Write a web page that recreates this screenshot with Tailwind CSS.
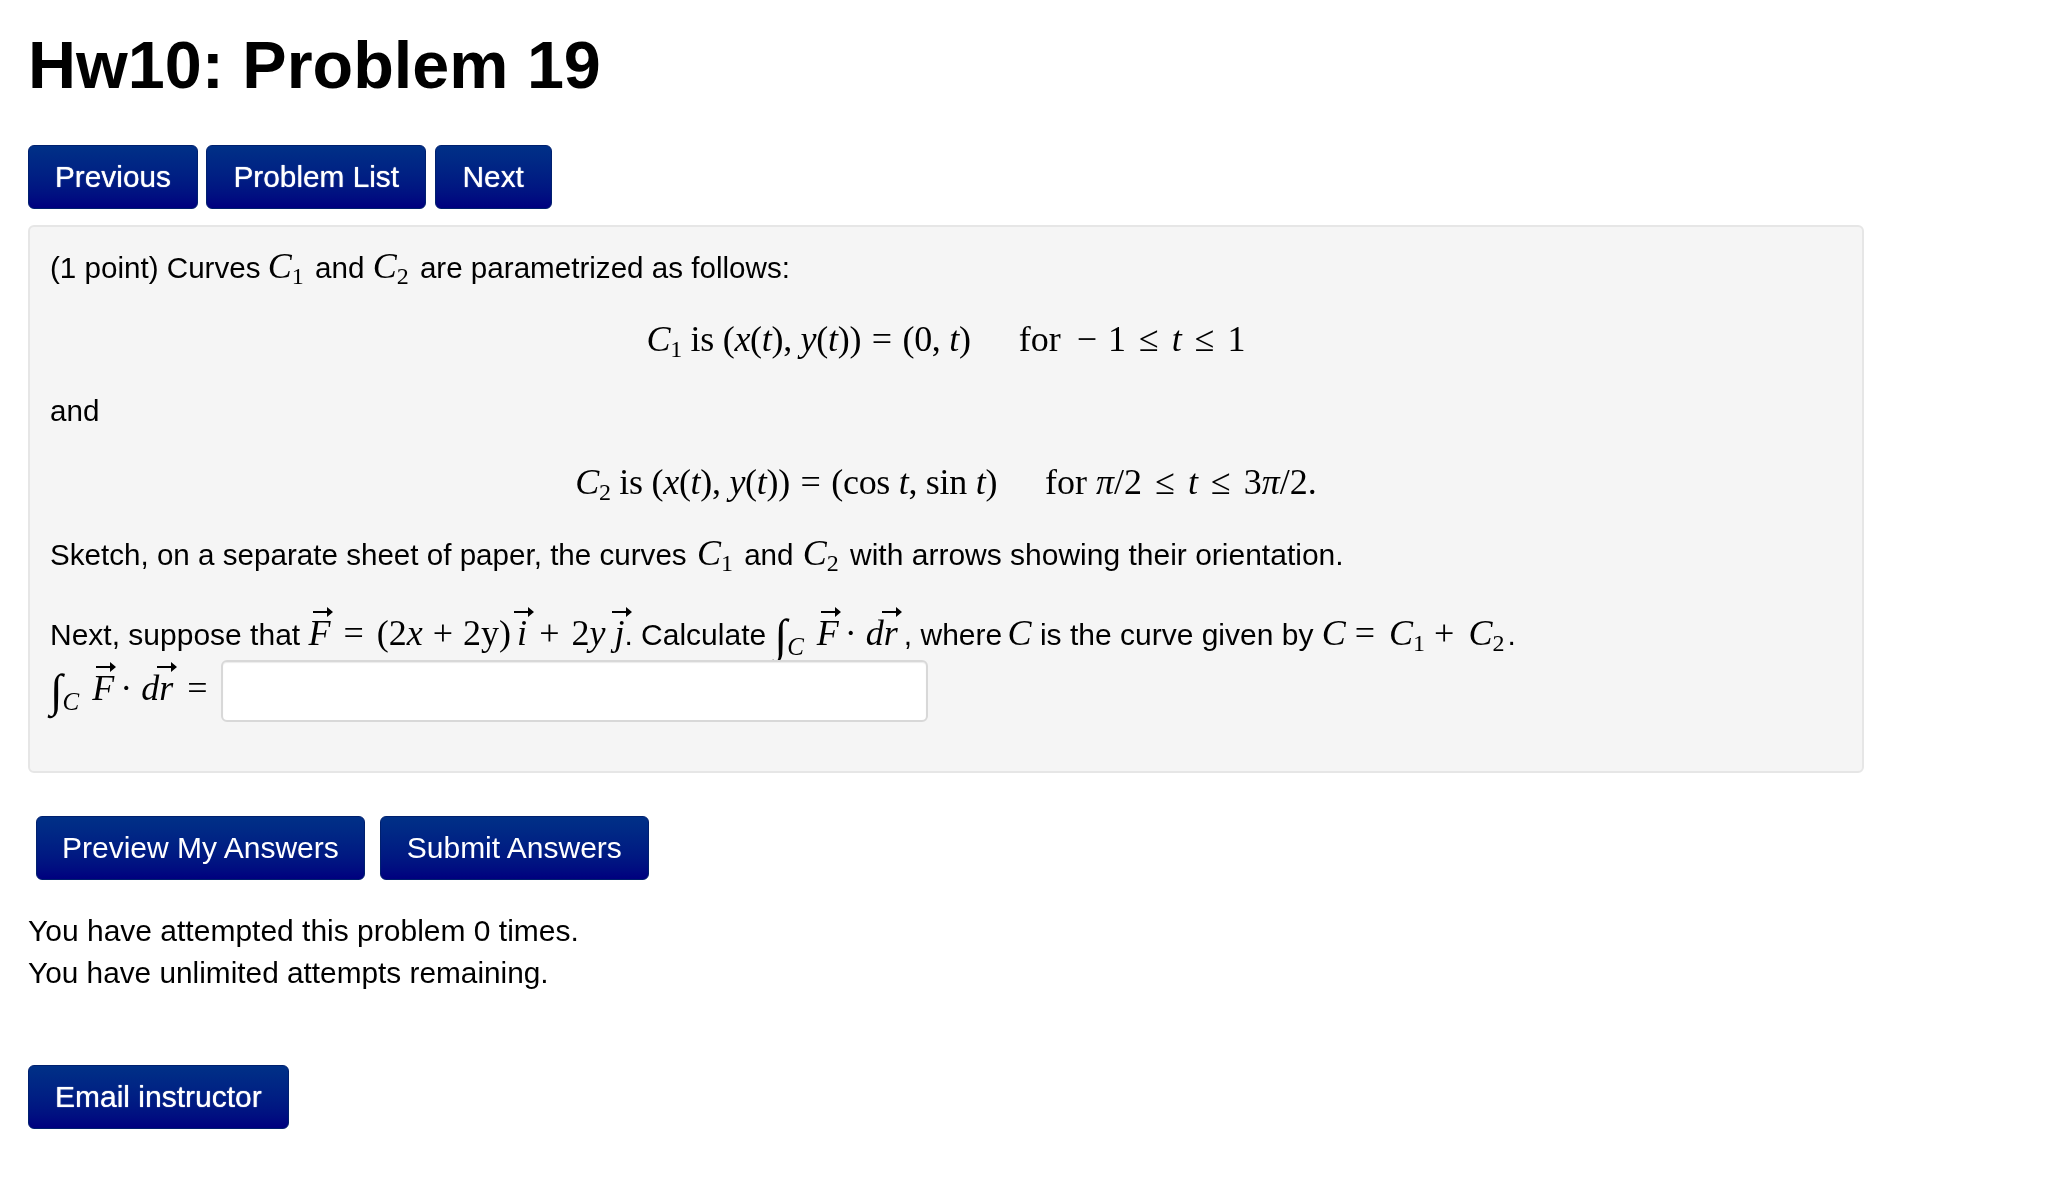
<!DOCTYPE html>
<html lang="en">
<head>
  <meta charset="UTF-8" />
  <title>Hw10: Problem 19</title>
  <script src="https://cdn.jsdelivr.net/npm/@tailwindcss/browser@4"></script>
</head>
<body class="bg-white text-black font-['Liberation_Sans',sans-serif] text-[30px] leading-[42px] pl-[28px] pr-[182px] blur-[0.5px]">
  <h1 class="pt-[26px] h-[145px] text-[66.5px] leading-[78px] font-bold">Hw10: Problem 19</h1>

  <nav class="flex gap-[8.5px] text-white text-[29.8px] [text-shadow:0_0_1px_#fff]">
    <a class="h-[64px] leading-[62px] px-[26px] rounded-[6px] border border-[#00206e] bg-linear-to-b from-[#003087] to-[#00007f]">Previous</a>
    <a class="h-[64px] leading-[62px] px-[26px] rounded-[6px] border border-[#00206e] bg-linear-to-b from-[#003087] to-[#00007f]">Problem List</a>
    <a class="h-[64px] leading-[62px] px-[27px] rounded-[6px] border border-[#00206e] bg-linear-to-b from-[#003087] to-[#00007f]">Next</a>
  </nav>

  <section class="mt-[16px] h-[548px] pt-[18px] px-[20px] rounded-[6px] border-2 border-[#e6e6e6] bg-[#f5f5f5] text-[29.6px]">
    <p class="h-[42px] whitespace-nowrap">(1 point) Curves <span class="font-['Liberation_Serif',serif] text-[36px] italic ml-[-1px]">C</span><span class="font-['Liberation_Serif',serif] text-[24px] align-[-6px]">1</span> <span class="ml-[3px]">and</span> <span class="font-['Liberation_Serif',serif] text-[36px] italic">C</span><span class="font-['Liberation_Serif',serif] text-[24px] align-[-6px]">2</span> <span class="ml-[3px]">are parametrized as follows:</span></p>

    <p class="mt-[31px] h-[42px] text-center whitespace-nowrap font-['Liberation_Serif',serif] text-[36px]"><span class="tracking-[-0.3px]"><i>C</i><span class="text-[24px] align-[-6px]">1</span> is (<i>x</i>(<i>t</i>), <i>y</i>(<i>t</i>)) <span class="mx-[2px]">=</span> (0, <i>t</i>)</span><span class="ml-[48px]">for</span><span class="ml-[16px]">&minus;</span> <span class="ml-[2px]">1</span> <span class="mx-[4px]">&le;</span> <i>t</i> <span class="mx-[4px]">&le;</span> 1</p>

    <p class="mt-[30px] h-[42px]">and</p>

    <p class="mt-[29px] h-[42px] text-center whitespace-nowrap font-['Liberation_Serif',serif] text-[36px]"><span class="tracking-[-0.3px]"><i>C</i><span class="text-[24px] align-[-6px]">2</span> is (<i>x</i>(<i>t</i>), <i>y</i>(<i>t</i>)) <span class="mx-[2px]">=</span> (cos <i>t</i>, sin <i>t</i>)</span><span class="ml-[48px]">for</span> <i>&pi;</i>/2 <span class="mx-[4px]">&le;</span> <i>t</i> <span class="mx-[4px]">&le;</span> 3<i>&pi;</i>/2.</p>

    <p class="mt-[29px] h-[42px] whitespace-nowrap">Sketch, on a separate sheet of paper, the curves <span class="font-['Liberation_Serif',serif] text-[36px] italic ml-[2px]">C</span><span class="font-['Liberation_Serif',serif] text-[24px] align-[-6px]">1</span> <span class="ml-[3px]">and</span> <span class="font-['Liberation_Serif',serif] text-[36px] italic ml-[1px]">C</span><span class="font-['Liberation_Serif',serif] text-[24px] align-[-6px]">2</span> <span class="ml-[3px] text-[30px]">with arrows showing their orientation.</span></p>

    <p class="mt-[38px] h-[42px] whitespace-nowrap text-[30px]">Next, suppose that <span class="font-['Liberation_Serif',serif] text-[36px]"><span class="relative inline-block italic">F<svg class="absolute left-[4px] top-[-5px] w-[20px] h-[10px]" viewBox="0 0 20 10" fill="#000"><path d="M0 4h14V0l6 5-6 5V6H0z"/></svg></span> <span class="mx-[4px]">=</span> (2<i>x</i> <span class="mx-[1px]">+</span> 2y)<span class="relative inline-block italic ml-[6px]">i<svg class="absolute left-[-3px] top-[-5px] w-[20px] h-[10px]" viewBox="0 0 20 10" fill="#000"><path d="M0 4h14V0l6 5-6 5V6H0z"/></svg></span> <span class="mx-[3px]">+</span> 2<i>y</i><span class="relative inline-block italic ml-[9px]">j<svg class="absolute left-[-2px] top-[-5px] w-[20px] h-[10px]" viewBox="0 0 20 10" fill="#000"><path d="M0 4h14V0l6 5-6 5V6H0z"/></svg></span></span>. Calculate <span class="font-['Liberation_Serif',serif] text-[36px]"><i class="text-[46px] leading-none align-[-6px]">&int;</i><i class="text-[25px] align-[-10px]">C</i><span class="relative inline-block italic ml-[13px] mr-[-3px]">F<svg class="absolute left-[4px] top-[-5px] w-[20px] h-[10px]" viewBox="0 0 20 10" fill="#000"><path d="M0 4h14V0l6 5-6 5V6H0z"/></svg></span> &middot; <i>d</i><span class="relative inline-block italic">r<svg class="absolute left-[-2px] top-[-5px] w-[20px] h-[10px]" viewBox="0 0 20 10" fill="#000"><path d="M0 4h14V0l6 5-6 5V6H0z"/></svg></span></span><span class="ml-[6px]">, where</span> <span class="font-['Liberation_Serif',serif] text-[36px] italic ml-[-3px]">C</span> is the curve given by <span class="font-['Liberation_Serif',serif] text-[36px]"><i>C</i> <span class="mr-[5px]">=</span> <i>C</i><span class="text-[24px] align-[-6px]">1</span> <span class="mr-[5px]">+</span> <i>C</i><span class="text-[24px] align-[-6px]">2</span></span><span class="ml-[3px]">.</span></p>

    <div class="mt-[5px] flex items-center gap-[13px]">
      <span class="pt-[8px] whitespace-nowrap font-['Liberation_Serif',serif] text-[36px]"><i class="text-[46px] leading-none align-[-6px]">&int;</i><i class="text-[25px] align-[-10px]">C</i><span class="relative inline-block italic ml-[13px] mr-[-3px]">F<svg class="absolute left-[4px] top-[-5px] w-[20px] h-[10px]" viewBox="0 0 20 10" fill="#000"><path d="M0 4h14V0l6 5-6 5V6H0z"/></svg></span> &middot; <i>d</i><span class="relative inline-block italic">r<svg class="absolute left-[-2px] top-[-5px] w-[20px] h-[10px]" viewBox="0 0 20 10" fill="#000"><path d="M0 4h14V0l6 5-6 5V6H0z"/></svg></span> <span class="ml-[5px]">=</span></span>
      <input type="text" class="w-[707px] h-[62px] rounded-[6px] border-2 border-[#d8d8d8] bg-white shadow-[inset_0_1px_1px_rgba(0,0,0,0.08)]" />
    </div>
  </section>

  <div class="mt-[43px] ml-[8px] flex gap-[15px] text-white [text-shadow:0_0_1px_#fff]">
    <button class="h-[64px] px-[25px] rounded-[6px] border border-[#00206e] bg-linear-to-b from-[#003087] to-[#00007f]">Preview My Answers</button>
    <button class="h-[64px] px-[26px] rounded-[6px] border border-[#00206e] bg-linear-to-b from-[#003087] to-[#00007f]">Submit Answers</button>
  </div>

  <p class="mt-[30px]">You have attempted this problem 0 times.</p>
  <p class="text-[29.8px]">You have unlimited attempts remaining.</p>

  <div class="mt-[71px] flex text-white [text-shadow:0_0_1px_#fff]">
    <a class="h-[64px] leading-[62px] px-[26px] rounded-[6px] border border-[#00206e] bg-linear-to-b from-[#003087] to-[#00007f]">Email instructor</a>
  </div>
</body>
</html>
